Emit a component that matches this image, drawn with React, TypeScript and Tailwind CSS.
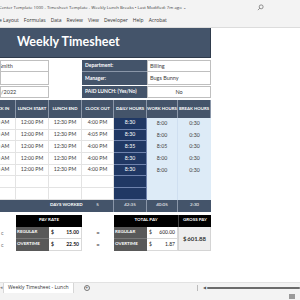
const rows = [
  ["8:00 AM", "12:00 PM", "12:30 PM", "4:00 PM", "8:30", "8:00", "0:30"],
  ["8:00 AM", "12:00 PM", "12:30 PM", "4:05 PM", "8:30", "8:00", "0:30"],
  ["8:00 AM", "12:00 PM", "12:30 PM", "4:00 PM", "8:35", "8:05", "0:30"],
  ["8:00 AM", "12:00 PM", "12:30 PM", "4:00 PM", "8:30", "8:00", "0:30"],
  ["8:00 AM", "12:00 PM", "12:30 PM", "4:00 PM", "8:30", "8:00", "0:30"],
  ["", "", "", "", "", "", ""],
  ["", "", "", "", "", "", ""],
];

const cols = "grid grid-cols-[16px_33px_33px_32px_33px_31px_33px] w-[211px]";

function SearchIcon() {
  return (
    <svg width="7" height="7" viewBox="0 0 16 16" fill="none" stroke="#555" strokeWidth="1.4">
      <circle cx="9.5" cy="6.5" r="4.5" />
      <path d="M6.3 9.7 L2 14" />
    </svg>
  );
}

export default function App() {
  return (
    <div className="w-[300px] h-[300px] overflow-hidden bg-white flex flex-col font-['Open_Sans',sans-serif]">
      {/* window title */}
      <div className="h-[15px] bg-[#f3f3f3] flex items-center text-[4.3px] text-[#444] whitespace-nowrap">
        <span className="-ml-[1px]">Center Template 1000 - Timesheet Template - Weekly Lunch Breaks • Last Modified: 7m ago ⌄</span>
        <div className="ml-auto mr-[36px] flex items-center">
          <SearchIcon />
        </div>
      </div>

      {/* ribbon tabs */}
      <div className="h-[13px] bg-[#f3f3f3] border-b border-[#dcdcdc] flex items-center gap-[5px] text-[5px] text-[#333] whitespace-nowrap">
        <span className="-ml-[1px]">e Layout</span>
        <span>Formulas</span>
        <span>Data</span>
        <span>Review</span>
        <span>View</span>
        <span>Developer</span>
        <span>Help</span>
        <span>Acrobat</span>
      </div>

      {/* sheet */}
      <div className="flex-1 flex flex-col font-['Lato',sans-serif] text-[#404040]">
        <div className="h-[30px] w-[211px] bg-[#44546a] border-r border-b border-[#2f3b4c] flex items-center pl-[17px]">
          <span className="text-white font-bold text-[12.5px] leading-none">Weekly Timesheet</span>
        </div>

        {/* info */}
        <div className="mt-[2px] flex flex-col">
          <div className={`${cols} h-[12px]`}>
            <div className="col-span-2 border border-[#bfbfbf] bg-white overflow-hidden flex items-center text-[5.5px] whitespace-nowrap">
              <span className="-ml-[15px]">John Smith</span>
            </div>
            <div />
            <div className="col-span-2 bg-[#44546a] border-b border-[#8a96a8] text-white text-[5px] font-bold flex items-center pl-[3px]">Department:</div>
            <div className="col-span-2 border border-[#bfbfbf] bg-white text-[5.5px] flex items-center pl-[2px]">Billing</div>
          </div>
          <div className={`${cols} h-[13px]`}>
            <div className="col-span-2 border border-t-0 border-[#bfbfbf] bg-white" />
            <div />
            <div className="col-span-2 bg-[#44546a] text-white text-[5px] font-bold flex items-center pl-[3px]">Manager:</div>
            <div className="col-span-2 border border-t-0 border-[#bfbfbf] bg-white text-[5.5px] flex items-center pl-[2px]">Bugs Bunny</div>
          </div>
          <div className={`${cols} h-[12px] mt-[1px]`}>
            <div className="col-span-2 border border-[#bfbfbf] bg-white overflow-hidden flex items-center text-[5.5px] whitespace-nowrap">
              <span className="-ml-[12px]">1/10/2022</span>
            </div>
            <div />
            <div className="col-span-2 bg-[#44546a] text-white text-[5px] font-bold flex items-center pl-[3px]">PAID LUNCH: (Yes/No)</div>
            <div className="col-span-2 border border-[#bfbfbf] bg-white text-[5.5px] flex items-center justify-center">No</div>
          </div>
        </div>

        {/* header */}
        <div className={`${cols} h-[18px] mt-[2px] bg-[#44546a] text-white text-[4.3px] font-bold`}>
          <div className="overflow-hidden border-r border-[#8a96a8] flex items-center">
            <div className="w-[33px] shrink-0 -ml-[17px] text-center whitespace-nowrap">CLOCK IN</div>
          </div>
          {["LUNCH START", "LUNCH END", "CLOCK OUT", "DAILY HOURS", "WORK HOURS", "BREAK HOURS"].map((h) => (
            <div key={h} className="border-r border-[#8a96a8] flex items-center justify-center whitespace-nowrap">{h}</div>
          ))}
        </div>

        {/* days */}
        {rows.map((r, i) => (
          <div key={i} className={`${cols} h-[11.7px] text-[5.2px]`}>
            <div className="overflow-hidden border-r border-b border-[#e3e3e3] flex items-center">
              <div className="w-[33px] shrink-0 -ml-[17px] text-center whitespace-nowrap">{r[0]}</div>
            </div>
            <div className="border-r border-b border-[#e3e3e3] flex items-center justify-center">{r[1]}</div>
            <div className="border-r border-b border-[#e3e3e3] flex items-center justify-center">{r[2]}</div>
            <div className="border-r border-b border-[#e3e3e3] flex items-center justify-center">{r[3]}</div>
            <div className="bg-[#203864] text-white border-b border-r border-[#6f83ad] flex items-center justify-center">{r[4]}</div>
            <div className="bg-[#ddebf7] border-r border-[#cfdff0] flex items-center justify-center">{r[5]}</div>
            <div className="bg-[#ddebf7] flex items-center justify-center">{r[6]}</div>
          </div>
        ))}

        {/* totals */}
        <div className={`${cols} h-[12px] bg-[#44546a] text-white text-[4.5px]`}>
          <div />
          <div />
          <div className="flex items-center pl-[1px] font-bold whitespace-nowrap">DAYS WORKED</div>
          <div className="border-r border-[#8a96a8] flex items-center justify-center">5</div>
          <div className="border-r border-[#8a96a8] flex items-center justify-center">42:35</div>
          <div className="border-r border-[#8a96a8] flex items-center justify-center">40:05</div>
          <div className="flex items-center justify-center">2:30</div>
        </div>

        {/* pay */}
        <div className={`${cols} mt-[3px] grid-rows-[12px_12px_12px] text-[4.5px]`}>
          <div />
          <div className="col-span-2 bg-black text-white font-bold flex items-center justify-center">PAY RATE</div>
          <div />
          <div className="col-span-2 bg-black text-white font-bold flex items-center justify-center">TOTAL PAY</div>
          <div className="bg-black text-white font-bold flex items-center justify-center border-l border-[#444]">GROSS PAY</div>

          <div className="overflow-hidden flex items-center text-[#777] text-[5.5px]"><span className="pl-[1px]">c</span></div>
          <div className="bg-[#595959] text-white font-bold flex items-center pl-[1px] border-b border-[#777]">REGULAR</div>
          <div className="border-b border-r border-[#d9d9d9] flex items-center px-[2px] text-[5px] font-bold text-[#222]">
            <span>$</span><span className="ml-auto">15.00</span>
          </div>
          <div className="flex items-center justify-center text-[6px] text-[#333]">=</div>
          <div className="bg-[#595959] text-white font-bold flex items-center pl-[1px] border-b border-[#777]">REGULAR</div>
          <div className="border-b border-r border-[#d9d9d9] flex items-center px-[2px] text-[5px] text-[#222]">
            <span>$</span><span className="ml-auto">600.00</span>
          </div>
          <div className="row-span-2 bg-[#eeeeee] border border-t-0 border-[#d4d4d4] flex items-center pl-[4px] pr-[4px] text-[6px] font-bold text-[#333]">
            <span>$</span><span className="ml-auto">601.88</span>
          </div>

          <div className="overflow-hidden flex items-center text-[#777] text-[5.5px]"><span className="pl-[1px]">c</span></div>
          <div className="bg-[#595959] text-white font-bold flex items-center pl-[1px]">OVERTIME</div>
          <div className="border-b border-r border-[#d9d9d9] flex items-center px-[2px] text-[5px] font-bold text-[#222]">
            <span>$</span><span className="ml-auto">22.50</span>
          </div>
          <div className="flex items-center justify-center text-[6px] text-[#333]">=</div>
          <div className="bg-[#595959] text-white font-bold flex items-center pl-[1px]">OVERTIME</div>
          <div className="border-b border-r border-[#d9d9d9] flex items-center px-[2px] text-[5px] text-[#222]">
            <span>$</span><span className="ml-auto">1.87</span>
          </div>
        </div>
      </div>

      {/* sheet tabs */}
      <div className="h-[11px] bg-[#f3f3f3] border-t border-[#e2e2e2] flex items-center text-[5px] text-[#333]">
        <span className="text-[#888] text-[5px] w-[3px]">◂</span>
        <div className="h-full bg-white border-x border-[#d6d6d6] flex items-center px-[4px] whitespace-nowrap">Weekly Timesheet - Lunch</div>
        <div className="ml-[10px] w-[6px] h-[6px] rounded-full border border-[#777] flex items-center justify-center text-[5px] leading-none text-[#555]">+</div>
        <div className="ml-auto w-[1px] h-[6px] bg-[#bbb]" />
        <span className="ml-[5px] text-[4px] text-[#555]">◀</span>
        <div className="ml-[1px] w-[93px] h-[2px] rounded-full bg-[#6b6b6b]" />
      </div>
      <div className="h-[7px] bg-[#f3f3f3] flex items-center justify-end pr-[5px]">
        <div className="w-[6px] h-[5px] bg-[#9a9a9a]" />
      </div>
    </div>
  );
}
